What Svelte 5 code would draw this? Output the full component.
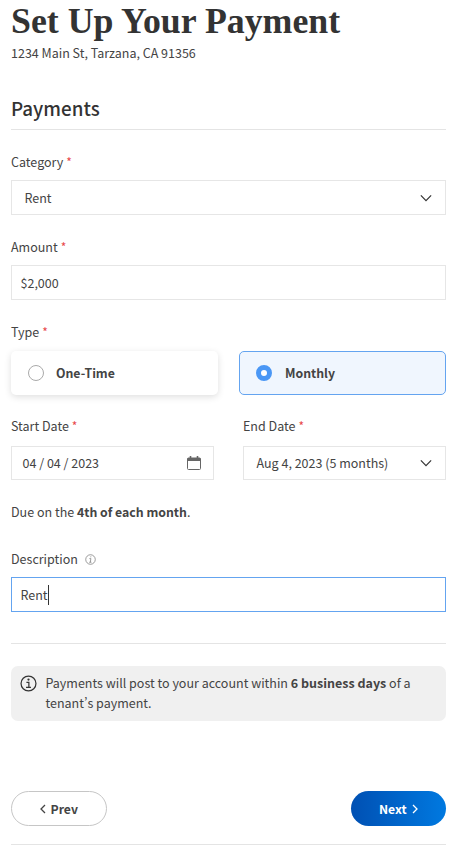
<script lang="ts">
	const star = '*';
</script>

<div class="page">
	<h1>Set Up Your Payment</h1>
	<p class="address">1234 Main St, Tarzana, CA 91356</p>

	<h2>Payments</h2>

	<div class="field category">
		<div class="label">Category <span class="req">{star}</span></div>
		<div class="box select">
			<span>Rent</span>
			<svg class="chevron" viewBox="0 0 14 8"><path d="M1 1l6 6 6-6" /></svg>
		</div>
	</div>

	<div class="field amount">
		<div class="label">Amount <span class="req">{star}</span></div>
		<div class="box plain">$2,000</div>
	</div>

	<div class="field type">
		<div class="label">Type <span class="req">{star}</span></div>
		<div class="radios">
			<div class="radio">
				<span class="dot"></span>
				<span>One-Time</span>
			</div>
			<div class="radio selected">
				<span class="dot"></span>
				<span>Monthly</span>
			</div>
		</div>
	</div>

	<div class="dates">
		<div class="field">
			<div class="label">Start Date <span class="req">{star}</span></div>
			<div class="box date">
				<span>04 / 04 / 2023</span>
				<svg class="calendar" viewBox="0 0 14 14">
					<rect x="0.5" y="2" width="13" height="11.5" rx="1" />
					<path class="band" d="M0.5 2h13v3h-13z" />
					<path class="pegs" d="M3.5 0v2.5M10.5 0v2.5" />
				</svg>
			</div>
		</div>
		<div class="field">
			<div class="label">End Date <span class="req">{star}</span></div>
			<div class="box select end">
				<span>Aug 4, 2023 (5 months)</span>
				<svg class="chevron" viewBox="0 0 14 8"><path d="M1 1l6 6 6-6" /></svg>
			</div>
		</div>
	</div>

	<p class="due">Due on the <b>4th of each month</b>.</p>

	<div class="field description">
		<div class="label">
			Description
			<svg class="tip" viewBox="0 0 12 12">
				<circle cx="6" cy="6" r="5.2" />
				<path d="M4.8 5h1.6L5.8 9M4.6 9h2.4M6.3 2.6v1" />
			</svg>
		</div>
		<div class="box plain focused"><span class="caret">Rent</span></div>
	</div>

	<hr class="rule-mid" />

	<div class="notice">
		<svg class="info" viewBox="0 0 18 18">
			<circle cx="9" cy="9" r="7.9" />
			<path d="M6.8 7.8h2.6v5.2M6.4 13h5.2" />
			<circle class="fill" cx="9" cy="4.8" r="1.2" />
		</svg>
		<p>Payments will post to your account within <b>6 business days</b> of a<br />tenant’s payment.</p>
	</div>

	<div class="actions">
		<button class="prev">
			<svg viewBox="0 0 6 10"><path d="M5 1L1 5l4 4" /></svg>
			Prev
		</button>
		<button class="next">
			Next
			<svg viewBox="0 0 6 10"><path d="M1 1l4 4-4 4" /></svg>
		</button>
	</div>

	<hr class="rule-end" />
</div>

<style>
	:global(body) {
		margin: 0;
		background: #fff;
	}

	.page {
		padding: 0 16px 0 11px;
		font-family: 'Noto Sans CJK SC', 'Noto Sans', sans-serif;
		font-size: 12.5px;
		line-height: 20px;
		color: #444;
	}

	h1 {
		margin: 0;
		font-family: 'Liberation Serif', 'DejaVu Serif', serif;
		font-size: 35.8px;
		line-height: 42px;
		font-weight: 700;
		color: #333;
		white-space: nowrap;
	}

	.address {
		margin: 1px 0 0;
		height: 20px;
	}

	h2 {
		margin: 30px 0 0;
		padding-bottom: 6px;
		font-size: 18.8px;
		line-height: 30px;
		font-weight: 500;
		color: #333;
		border-bottom: 1px solid #e4e4e4;
	}

	.label {
		display: flex;
		gap: 3px;
		align-items: center;
		height: 20px;
	}

	.req {
		color: #e8484a;
		font-size: 12px;
		line-height: 14px;
	}

	.category,
	.amount,
	.type {
		margin-top: 22px;
	}

	.box {
		box-sizing: border-box;
		height: 35px;
		margin-top: 8px;
		border: 1px solid #e6e6e6;
		display: flex;
		align-items: center;
		justify-content: space-between;
		background: #fff;
	}

	.select {
		padding: 0 13px 0 12.5px;
	}

	.plain {
		padding: 0 8.5px;
	}

	.box.focused {
		border-color: #64a4f0;
	}

	.caret {
		border-right: 1px solid #333;
		line-height: 20px;
	}

	.chevron {
		width: 12px;
		height: 8px;
		fill: none;
		stroke: #333;
		stroke-width: 1.4;
	}

	.radios {
		display: flex;
		justify-content: space-between;
		margin-top: 9px;
	}

	.radio {
		box-sizing: border-box;
		width: 207px;
		height: 44px;
		display: flex;
		align-items: center;
		gap: 12px;
		padding-left: 17px;
		border-radius: 5px;
		background: #fff;
		font-size: 12.3px;
		font-weight: 700;
		box-shadow: 0 2px 7px rgba(0, 0, 0, 0.13);
	}

	.radio.selected {
		padding-left: 16px;
		gap: 13px;
		background: #f0f6fe;
		border: 1px solid #64a4f0;
		box-shadow: none;
	}

	.dot {
		box-sizing: border-box;
		width: 16px;
		height: 16px;
		border-radius: 50%;
		border: 1px solid #aaa;
		background: #fff;
	}

	.selected .dot {
		border: 5px solid #4a97f5;
	}

	.dates {
		display: grid;
		grid-template-columns: 203px 203px;
		justify-content: space-between;
		margin-top: 21px;
	}

	.dates .box {
		height: 34px;
		margin-top: 10px;
	}

	.date {
		padding: 0 12px 0 10.5px;
	}

	.calendar {
		width: 14px;
		height: 14px;
		fill: none;
		stroke: #666;
		stroke-width: 1;
	}

	.band {
		fill: #666;
		stroke: none;
	}

	.pegs {
		stroke-width: 1.6;
	}

	.due {
		margin: 22px 0 0;
		height: 20px;
	}

	.due b {
		font-size: 12.3px;
	}

	.description {
		margin-top: 27px;
	}

	.description .label {
		gap: 7px;
	}

	.tip {
		width: 11px;
		height: 11px;
		fill: none;
		stroke: #777;
		stroke-width: 0.8;
	}

	hr {
		border: none;
		border-top: 1px solid #e4e4e4;
		margin: 0;
	}

	.rule-mid {
		margin-top: 31px;
	}

	.notice {
		box-sizing: border-box;
		height: 55px;
		margin-top: 22px;
		display: flex;
		gap: 9px;
		padding: 7px 12px 0 8.5px;
		border-radius: 7px;
		background: #f0f0f0;
	}

	.notice p {
		margin: 0;
		font-feature-settings: 'pwid';
	}

	.info {
		flex: none;
		width: 17px;
		height: 17px;
		margin-top: 2px;
		fill: none;
		stroke: #333;
		stroke-width: 1.3;
	}

	.info .fill {
		fill: #333;
		stroke: none;
	}

	.actions {
		display: flex;
		justify-content: space-between;
		margin-top: 70px;
	}

	button {
		box-sizing: border-box;
		width: 95.5px;
		height: 35px;
		border-radius: 18px;
		display: flex;
		align-items: center;
		justify-content: center;
		gap: 5px;
		font-family: inherit;
		font-size: 12.2px;
		font-weight: 700;
		padding: 0;
	}

	button svg {
		width: 6px;
		height: 10px;
		fill: none;
		stroke: currentColor;
		stroke-width: 1.3;
	}

	.prev {
		background: #fff;
		border: 1.5px solid #c6c6c6;
		color: #444;
	}

	.next {
		border: none;
		color: #fff;
		background: linear-gradient(90deg, #0050b3, #0079e0);
	}

	.rule-end {
		margin-top: 18px;
	}
</style>
